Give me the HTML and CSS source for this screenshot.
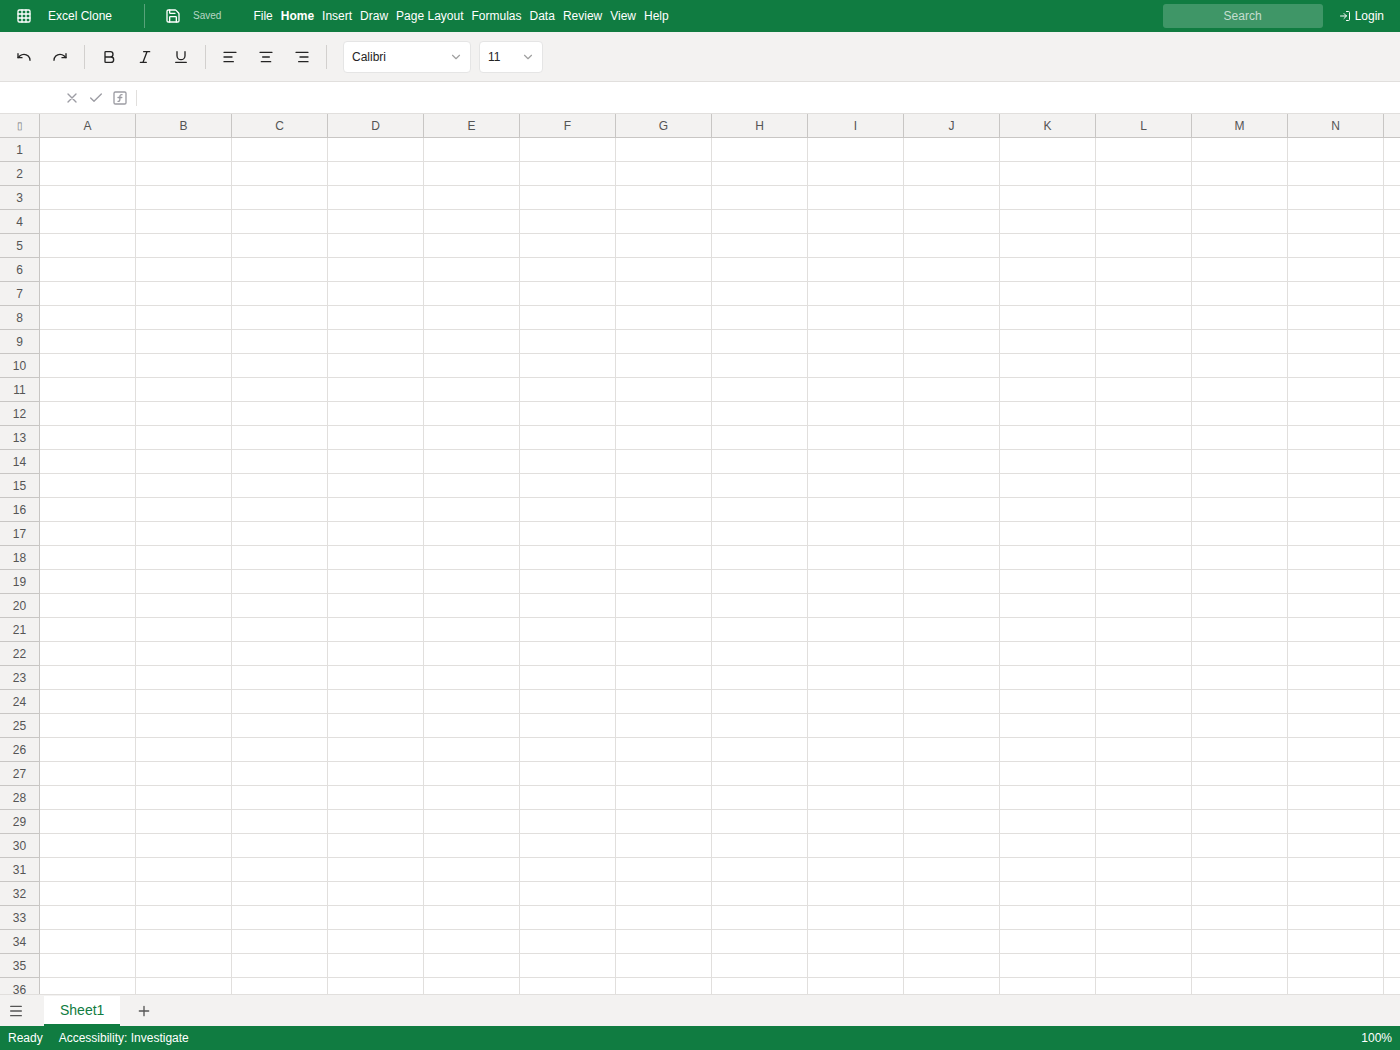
FILE: index.html
```html
<!DOCTYPE html>
<html lang="en">
<head>
    <meta charset="UTF-8">
    <meta name="viewport" content="width=device-width, initial-scale=1.0">
    <title>Excel Clone</title>
    <link rel="stylesheet" href="styles.css">
</head>
<body>
    <!-- title bar -->
    <header class="topbar">
        <svg class="icon logo" viewBox="0 0 24 24"><rect x="3" y="3" width="18" height="18" rx="2"/><path d="M3 9h18M3 15h18M9 3v18M15 3v18"/></svg>
        <span class="title">Excel Clone</span>
        <span class="topbar-line"></span>
        <button type="button" class="save" aria-label="Save">
            <svg class="icon" viewBox="0 0 24 24"><path d="M15.2 3a2 2 0 0 1 1.4.6l3.8 3.8a2 2 0 0 1 .6 1.4V19a2 2 0 0 1-2 2H5a2 2 0 0 1-2-2V5a2 2 0 0 1 2-2z"/><path d="M17 21v-7a1 1 0 0 0-1-1H8a1 1 0 0 0-1 1v7"/><path d="M7 3v4a1 1 0 0 0 1 1h7"/></svg>
        </button>
        <span class="saved">Saved</span>
        <nav class="menu">
            <a href="#">File</a>
            <a href="#" class="active">Home</a>
            <a href="#">Insert</a>
            <a href="#">Draw</a>
            <a href="#">Page Layout</a>
            <a href="#">Formulas</a>
            <a href="#">Data</a>
            <a href="#">Review</a>
            <a href="#">View</a>
            <a href="#">Help</a>
        </nav>
        <input type="text" class="search" placeholder="Search" aria-label="Search">
        <button type="button" class="login">
            <svg class="icon small" viewBox="0 0 24 24"><path d="M15 3h4a2 2 0 0 1 2 2v14a2 2 0 0 1-2 2h-4"/><path d="M10 17l5-5-5-5"/><path d="M15 12H3"/></svg>
            Login
        </button>
    </header>

    <!-- toolbar -->
    <div class="toolbar">
        <button type="button" class="tool" aria-label="Undo">
            <svg class="icon" viewBox="0 0 24 24"><path d="M3 7v6h6"/><path d="M21 17a9 9 0 0 0-9-9 9 9 0 0 0-6 2.3L3 13"/></svg>
        </button>
        <button type="button" class="tool" aria-label="Redo">
            <svg class="icon" viewBox="0 0 24 24"><path d="M21 7v6h-6"/><path d="M3 17a9 9 0 0 1 9-9 9 9 0 0 1 6 2.3l3 2.7"/></svg>
        </button>
        <span class="line"></span>
        <button type="button" class="tool" aria-label="Bold">
            <svg class="icon" viewBox="0 0 24 24"><path d="M6 12h9a4 4 0 0 1 0 8H7a1 1 0 0 1-1-1V5a1 1 0 0 1 1-1h7a4 4 0 0 1 0 8"/></svg>
        </button>
        <button type="button" class="tool" aria-label="Italic">
            <svg class="icon" viewBox="0 0 24 24"><path d="M19 4h-9M14 20H5M15 4L9 20"/></svg>
        </button>
        <button type="button" class="tool" aria-label="Underline">
            <svg class="icon" viewBox="0 0 24 24"><path d="M6 4v6a6 6 0 0 0 12 0V4"/><path d="M4 20h16"/></svg>
        </button>
        <span class="line"></span>
        <button type="button" class="tool" aria-label="Align left">
            <svg class="icon" viewBox="0 0 24 24"><path d="M21 5H3M15 12H3M17 19H3"/></svg>
        </button>
        <button type="button" class="tool" aria-label="Align center">
            <svg class="icon" viewBox="0 0 24 24"><path d="M21 5H3M17 12H7M19 19H5"/></svg>
        </button>
        <button type="button" class="tool" aria-label="Align right">
            <svg class="icon" viewBox="0 0 24 24"><path d="M21 5H3M21 12H9M21 19H7"/></svg>
        </button>
        <span class="line"></span>
        <div class="fonts">
            <div class="pick">
                <select class="family" aria-label="Font">
                    <option>Calibri</option>
                    <option>Arial</option>
                </select>
                <svg class="icon arrow" viewBox="0 0 24 24"><path d="M6 9l6 6 6-6"/></svg>
            </div>
            <div class="pick">
                <select class="size" aria-label="Font size">
                    <option>11</option>
                    <option>12</option>
                </select>
                <svg class="icon arrow" viewBox="0 0 24 24"><path d="M6 9l6 6 6-6"/></svg>
            </div>
        </div>
    </div>

    <!-- formula bar -->
    <div class="formula">
        <input type="text" class="cell-name" aria-label="Cell">
        <button type="button" class="mini" aria-label="Cancel">
            <svg class="icon" viewBox="0 0 24 24"><path d="M18 6L6 18M6 6l12 12"/></svg>
        </button>
        <button type="button" class="mini" aria-label="Accept">
            <svg class="icon" viewBox="0 0 24 24"><path d="M20 6L9 17l-5-5"/></svg>
        </button>
        <button type="button" class="mini" aria-label="Insert function">
            <svg class="icon" viewBox="0 0 24 24"><rect x="3" y="3" width="18" height="18" rx="2"/><path d="M9 17c2 0 2.8-1 2.8-2.8V10c0-2 1-3.3 3.2-3"/><path d="M9 11.2h5.7"/></svg>
        </button>
        <input type="text" class="formula-input" aria-label="Formula">
    </div>

    <main class="grid">
        <table class="sheet">
            <thead>
                <tr id="cols"><th class="corner">&#9647;</th></tr>
            </thead>
            <tbody id="rows"></tbody>
        </table>
    </main>

    <!-- sheet tabs -->
    <div class="tabs">
        <button type="button" class="mini" aria-label="All sheets">
            <svg class="icon" viewBox="0 0 24 24"><path d="M4 5h16M4 12h16M4 19h16"/></svg>
        </button>
        <button type="button" class="tab">Sheet1</button>
        <button type="button" class="mini" aria-label="Add sheet">
            <svg class="icon" viewBox="0 0 24 24"><path d="M5 12h14M12 5v14"/></svg>
        </button>
    </div>

    <footer class="status">
        <span>Ready</span>
        <span>Accessibility: Investigate</span>
        <span class="percent">100%</span>
    </footer>

    <script>
        const cols=document.getElementById('cols')
        const rows=document.getElementById('rows')

        for(let c=0;c<26;c++){
            const th=document.createElement('th')
            th.textContent=String.fromCharCode(65+c)
            cols.appendChild(th)
        }
        for(let r=1;r<=50;r++){
            const tr=document.createElement('tr')
            const th=document.createElement('th')
            th.textContent=r
            tr.appendChild(th)
            for(let c=0;c<26;c++){
                tr.appendChild(document.createElement('td'))
            }
            rows.appendChild(tr)
        }
    </script>
</body>
</html>
```
FILE: styles.css
```css
* {
    box-sizing: border-box;
}
body {
    margin: 0;
    height: 100vh;
    display: flex;
    flex-direction: column;
    overflow: hidden;
    font-family: "Liberation Sans", Arial, sans-serif;
    font-size: 12px;
    line-height: 16px;
    color: #242424;
    background-color: white;
}
button, input, select {
    font: inherit;
    color: inherit;
    margin: 0;
    padding: 0;
    border: none;
    background: none;
}
button {
    display: flex;
    align-items: center;
    justify-content: center;
    cursor: pointer;
}
.icon {
    width: 16px;
    height: 16px;
    flex-shrink: 0;
    fill: none;
    stroke: currentColor;
    stroke-width: 2;
    stroke-linecap: round;
    stroke-linejoin: round;
}
.small {
    width: 12px;
    height: 12px;
}

/* title bar */
.topbar {
    display: flex;
    align-items: center;
    height: 32px;
    flex-shrink: 0;
    padding: 0 16px;
    background-color: #107c41;
    color: white;
}
.title {
    margin-left: 16px;
}
.topbar-line {
    width: 1px;
    height: 24px;
    margin-left: 32px;
    background-color: rgba(255, 255, 255, 0.3);
}
.save {
    margin: 0 12px 0 20px;
}
.saved {
    font-size: 10px;
    color: rgba(255, 255, 255, 0.7);
}
.menu {
    display: flex;
    gap: 8px;
    margin-left: 32px;
}
.menu a {
    color: white;
    text-decoration: none;
}
.menu .active {
    font-weight: bold;
}
.search {
    width: 160px;
    height: 24px;
    margin-left: auto;
    border-radius: 3px;
    background-color: rgba(255, 255, 255, 0.2);
    text-align: center;
}
.search::placeholder {
    color: rgba(255, 255, 255, 0.7);
}
.login {
    gap: 4px;
    margin-left: 16px;
}

/* toolbar */
.toolbar {
    display: flex;
    align-items: center;
    gap: 4px;
    height: 50px;
    flex-shrink: 0;
    padding: 0 8px;
    background-color: #f3f2f1;
    border-bottom: 1px solid #e1dfdd;
}
.tool {
    width: 32px;
    height: 32px;
}
.line {
    width: 1px;
    height: 24px;
    margin: 0 4px;
    background-color: #d2d0ce;
}
.fonts {
    display: flex;
    gap: 8px;
    margin-left: 8px;
}
.pick {
    position: relative;
}
.pick select {
    appearance: none;
    height: 32px;
    padding: 0 8px;
    border: 1px solid #e5e5e5;
    border-radius: 4px;
    background-color: white;
}
.pick .family {
    width: 128px;
}
.pick .size {
    width: 64px;
}
.arrow {
    width: 14px;
    height: 14px;
    position: absolute;
    right: 8px;
    top: 9px;
    color: #a0a0a0;
    pointer-events: none;
}

/* formula bar */
.formula {
    display: flex;
    align-items: center;
    gap: 8px;
    height: 32px;
    flex-shrink: 0;
    padding: 0 8px;
    border-bottom: 1px solid #e1dfdd;
}
.formula .mini {
    color: #9c9ca3;
}
.cell-name {
    width: 48px;
    text-align: center;
}
.formula-input {
    flex: 1;
    height: 16px;
    padding-left: 8px;
    border-left: 1px solid #e1dfdd;
}

/* cells */
.grid {
    flex: 1;
    min-height: 0;
    overflow: auto;
    scrollbar-width: none;
}
.sheet {
    table-layout: fixed;
    width: 2536px;
    border-collapse: separate;
    border-spacing: 0;
}
.sheet th, .sheet td {
    height: 24px;
    padding: 0;
    border-right: 1px solid #e1dfdd;
    border-bottom: 1px solid #e1dfdd;
}
.sheet th {
    width: 96px;
    font-weight: normal;
    color: #555;
    background-color: #f3f2f1;
    border-color: #c8c6c4;
}
.sheet .corner {
    width: 40px;
    font-size: 10px;
    color: #777;
}

/* sheet tabs */
.tabs {
    display: flex;
    align-items: center;
    height: 32px;
    flex-shrink: 0;
    padding: 0 8px;
    border-top: 1px solid #e1dfdd;
    background-color: #f3f2f1;
    color: #555;
}
.tab {
    height: 30px;
    align-self: flex-end;
    margin: 0 16px 0 20px;
    padding: 0 16px;
    border-bottom: 2px solid #107c41;
    background-color: white;
    font-size: 14px;
    color: #107c41;
}

.status {
    display: flex;
    align-items: center;
    gap: 16px;
    height: 24px;
    flex-shrink: 0;
    padding: 0 8px;
    background-color: #107c41;
    color: white;
}
.percent {
    margin-left: auto;
}
```
